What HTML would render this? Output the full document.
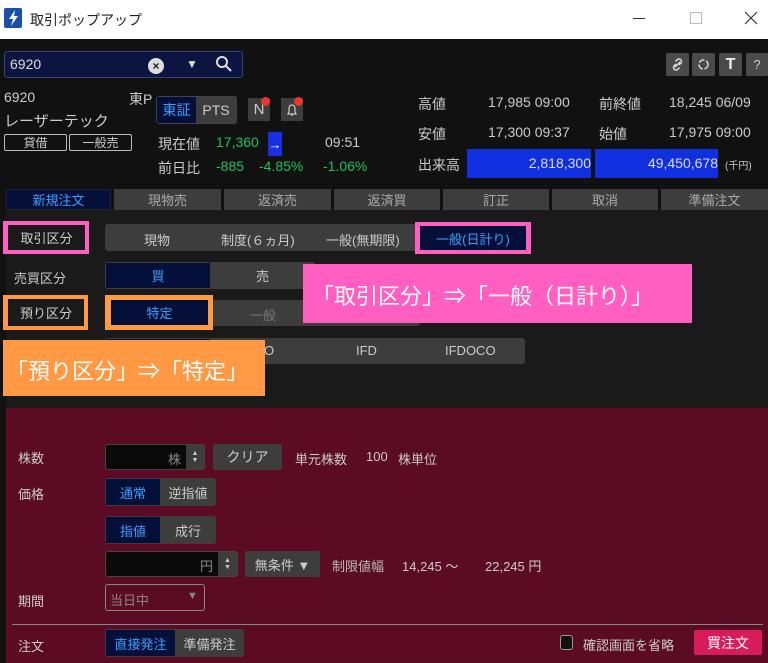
<!DOCTYPE html>
<html><head><meta charset="utf-8"><style>
*{margin:0;padding:0;box-sizing:border-box}
body{width:768px;height:663px;overflow:hidden;background:#111;font-family:"Liberation Sans","Noto Sans CJK JP",sans-serif;color:#ccc;position:relative;font-size:13px}
.a{position:absolute;white-space:nowrap}
.btn{position:absolute;display:flex;align-items:center;justify-content:center;white-space:nowrap}
.g{background:#3d3d3d;color:#ccc}
.n{background:#05103a;color:#3aa0ff}
.gr{color:#19c45a}
</style></head><body>
<div class="a" style="left:0;top:0;width:768px;height:39px;background:#fff"></div>
<div class="a" style="left:4px;top:8px;width:18px;height:20px;background:#1b4fa8;border-radius:2px"></div>
<svg class="a" style="left:4px;top:8px" width="18" height="20"><path d="M11 2 L5 11 H9 L7 18 L14 8 H10 Z" fill="#fff"/></svg>
<div class="a" style="left:30px;top:10px;color:#222;font-size:14px">取引ポップアップ</div>
<div class="a" style="left:633px;top:18px;width:12px;height:1px;background:#333"></div>
<div class="a" style="left:690px;top:12px;width:12px;height:12px;border:1px solid #bbb"></div>
<svg class="a" style="left:744px;top:11px" width="14" height="14"><path d="M1 1 L13 13 M13 1 L1 13" stroke="#333" stroke-width="1.2"/></svg>

<div class="a" style="left:4px;top:51px;width:239px;height:27px;background:#0b1540;border:1px solid #334477;border-radius:3px"></div>
<div class="a" style="left:10px;top:56px;color:#ddd;font-size:14px">6920</div>
<div class="a" style="left:148px;top:58px;width:16px;height:16px;border-radius:8px;background:#ddd;color:#222;font-size:12px;text-align:center;line-height:16px;font-weight:bold">×</div>
<div class="a" style="left:186px;top:57px;color:#ddd;font-size:12px">▼</div>
<svg class="a" style="left:215px;top:55px" width="18" height="18"><circle cx="7" cy="7" r="5" stroke="#ddd" stroke-width="2" fill="none"/><path d="M11 11 L16 16" stroke="#ddd" stroke-width="2"/></svg>
<div class="a" style="left:666px;top:53px;width:23px;height:23px;border-radius:2px;background:#4a4a4a"></div>
<svg class="a" style="left:666px;top:53px" width="23" height="23"><path d="M9 14 L14 9 M10 11 L8 13 a2.5 2.5 0 0 0 3.5 3.5 L13.5 14.5 M13 12 L15 10 a2.5 2.5 0 0 0 -3.5 -3.5 L9.5 8.5" stroke="#ddd" stroke-width="1.5" fill="none"/></svg>
<div class="a" style="left:692px;top:53px;width:23px;height:23px;border-radius:2px;background:#4a4a4a"></div>
<svg class="a" style="left:692px;top:53px" width="23" height="23"><circle cx="11.5" cy="11.5" r="4.5" stroke="#ddd" stroke-width="1.5" fill="none" stroke-dasharray="6 2"/></svg>
<div class="btn" style="left:719px;top:53px;width:23px;height:23px;border-radius:2px;font-weight:bold;font-size:16px;color:#eee;background:#4a4a4a">T</div>
<div class="btn" style="left:746px;top:53px;width:22px;height:23px;border-radius:2px;background:#4a4a4a;color:#ccc">?</div>

<div class="a" style="left:4px;top:89px;font-size:14px">6920</div>
<div class="a" style="left:129px;top:89px;font-size:14px">東P</div>
<div class="a" style="left:4px;top:110px;font-size:15px">レーザーテック</div>
<div class="btn" style="left:4px;top:134px;width:63px;height:17px;border:1px solid #bbb;border-radius:2px;font-size:12px">貸借</div>
<div class="btn" style="left:69px;top:134px;width:63px;height:17px;border:1px solid #bbb;border-radius:2px;font-size:12px">一般売</div>
<div class="a" style="left:156px;top:96px;width:81px;height:28px;border:1px solid #444;border-radius:3px;background:#3d3d3d"></div>
<div class="btn n" style="left:157px;top:97px;width:39px;height:26px;font-size:14px">東証</div>
<div class="btn" style="left:196px;top:97px;width:40px;height:26px;font-size:14px">PTS</div>
<div class="btn g" style="left:248px;top:98px;width:22px;height:23px;font-size:15px">N</div>
<div class="a" style="left:261px;top:97px;width:9px;height:9px;border-radius:5px;background:#e33"></div>
<div class="a g" style="left:281px;top:98px;width:22px;height:23px"></div>
<svg class="a" style="left:281px;top:98px" width="22" height="23"><path d="M7 16 H15 L14 14 V10 a3 3 0 0 0 -6 0 V14 Z M10 17 H12" stroke="#ccc" stroke-width="1.2" fill="none"/></svg>
<div class="a" style="left:294px;top:97px;width:9px;height:9px;border-radius:5px;background:#e33"></div>
<div class="a" style="left:158px;top:134px;font-size:14px">現在値</div>
<div class="a gr" style="left:216px;top:134px;font-size:14px">17,360</div>
<div class="btn" style="left:268px;top:132px;width:14px;height:24px;background:#1a2fe0;color:#fff">→</div>
<div class="a" style="left:325px;top:134px;font-size:14px">09:51</div>
<div class="a" style="left:158px;top:158px;font-size:14px">前日比</div>
<div class="a gr" style="left:216px;top:158px;font-size:14px">-885</div>
<div class="a gr" style="left:259px;top:158px;font-size:14px">-4.85%</div>
<div class="a gr" style="left:323px;top:158px;font-size:14px">-1.06%</div>

<div class="a" style="left:418px;top:94px;font-size:14px">高値</div>
<div class="a" style="left:488px;top:94px;font-size:14px">17,985 09:00</div>
<div class="a" style="left:599px;top:94px;font-size:14px">前終値</div>
<div class="a" style="left:669px;top:94px;font-size:14px">18,245 06/09</div>
<div class="a" style="left:418px;top:124px;font-size:14px">安値</div>
<div class="a" style="left:488px;top:124px;font-size:14px">17,300 09:37</div>
<div class="a" style="left:599px;top:124px;font-size:14px">始値</div>
<div class="a" style="left:669px;top:124px;font-size:14px">17,975 09:00</div>
<div class="a" style="left:418px;top:155px;font-size:14px">出来高</div>
<div class="a" style="left:467px;top:149px;width:124px;height:29px;background:#1030e0;color:#ddd;font-size:14px;text-align:right;line-height:29px">2,818,300</div>
<div class="a" style="left:595px;top:149px;width:123px;height:29px;background:#1030e0;color:#ddd;font-size:14px;text-align:right;line-height:29px">49,450,678</div>
<div class="a" style="left:725px;top:157px;font-size:10px">(千円)</div>

<div class="a" style="left:0;top:210px;width:768px;height:198px;background:#1a1a1a;border-left:6px solid #111"></div>
<div class="btn n" style="left:6px;top:189px;width:105px;height:21px;font-size:13px;border:1px solid #223">新規注文</div>
<div class="btn g" style="left:114px;top:189px;width:107px;height:21px;color:#aaa">現物売</div>
<div class="btn g" style="left:224px;top:189px;width:107px;height:21px;color:#aaa">返済売</div>
<div class="btn g" style="left:334px;top:189px;width:106px;height:21px;color:#aaa">返済買</div>
<div class="btn g" style="left:443px;top:189px;width:106px;height:21px;color:#aaa">訂正</div>
<div class="btn g" style="left:552px;top:189px;width:106px;height:21px;color:#aaa">取消</div>
<div class="btn g" style="left:661px;top:189px;width:107px;height:21px;color:#aaa">準備注文</div>

<div class="a" style="left:3px;top:221px;width:86px;height:33px;background:#ff5fc0"></div>
<div class="btn" style="left:8px;top:225px;width:77px;height:25px;background:#1a1a1a">取引区分</div>
<div class="a g" style="left:105px;top:224px;width:315px;height:27px;border-radius:3px"></div>
<div class="a" style="left:144px;top:230px">現物</div>
<div class="a" style="left:221px;top:230px">制度(６ヵ月)</div>
<div class="a" style="left:326px;top:230px">一般(無期限)</div>
<div class="a" style="left:415px;top:222px;width:116px;height:32px;background:#ff5fc0"></div>
<div class="btn n" style="left:420px;top:226px;width:106px;height:24px">一般(日計り)</div>

<div class="a" style="left:14px;top:268px">売買区分</div>
<div class="a g" style="left:105px;top:262px;width:210px;height:27px;border-radius:3px"></div>
<div class="btn n" style="left:106px;top:263px;width:104px;height:25px">買</div>
<div class="btn" style="left:210px;top:263px;width:105px;height:25px">売</div>

<div class="a g" style="left:105px;top:300px;width:315px;height:26px;border-radius:3px"></div>
<div class="a" style="left:250px;top:305px;color:#777">一般</div>
<div class="a" style="left:3px;top:295px;width:85px;height:35px;background:#ff9944"></div>
<div class="btn" style="left:8px;top:299px;width:76px;height:27px;background:#1a1a1a">預り区分</div>
<div class="a" style="left:105px;top:295px;width:108px;height:35px;background:#ff9944"></div>
<div class="btn n" style="left:111px;top:300px;width:97px;height:25px">特定</div>

<div class="a g" style="left:105px;top:338px;width:420px;height:26px;border-radius:3px"></div>
<div class="a n" style="left:106px;top:339px;width:104px;height:24px"></div>
<div class="a" style="left:264px;top:343px">O</div>
<div class="a" style="left:356px;top:343px">IFD</div>
<div class="a" style="left:445px;top:343px">IFDOCO</div>

<div class="a" style="left:303px;top:264px;width:389px;height:59px;background:#ff5fc0"></div>
<div class="a" style="left:312px;top:279px;color:#fff;font-size:22px">「取引区分」⇒「一般（日計り）」</div>
<div class="a" style="left:3px;top:340px;width:262px;height:56px;background:#ff9944"></div>
<div class="a" style="left:6px;top:354px;color:#fff;font-size:22px">「預り区分」⇒「特定」</div>

<div class="a" style="left:6px;top:408px;width:762px;height:255px;background:#5b0b24"></div>
<div class="a" style="left:18px;top:448px">株数</div>
<div class="a" style="left:105px;top:444px;width:100px;height:26px;background:#0a0a0a;border:1px solid #444;border-radius:3px"></div>
<div class="a" style="left:168px;top:449px;color:#888">株</div>
<div class="btn g" style="left:186px;top:445px;width:18px;height:24px;font-size:7px;flex-direction:column">▲<br>▼</div>
<div class="btn g" style="left:213px;top:444px;width:69px;height:26px;font-size:14px;border-radius:2px">クリア</div>
<div class="a" style="left:295px;top:449px">単元株数</div>
<div class="a" style="left:366px;top:449px">100</div>
<div class="a" style="left:398px;top:449px">株単位</div>

<div class="a" style="left:18px;top:484px">価格</div>
<div class="a g" style="left:105px;top:478px;width:111px;height:28px;border-radius:3px"></div>
<div class="btn n" style="left:106px;top:479px;width:54px;height:26px">通常</div>
<div class="btn" style="left:160px;top:479px;width:56px;height:26px">逆指値</div>
<div class="a g" style="left:105px;top:516px;width:111px;height:28px;border-radius:3px"></div>
<div class="btn n" style="left:106px;top:517px;width:54px;height:26px">指値</div>
<div class="btn" style="left:160px;top:517px;width:56px;height:26px">成行</div>

<div class="a" style="left:105px;top:551px;width:133px;height:26px;background:#0a0a0a;border:1px solid #444;border-radius:3px"></div>
<div class="a" style="left:200px;top:556px;color:#888">円</div>
<div class="btn g" style="left:218px;top:552px;width:19px;height:24px;font-size:7px;flex-direction:column">▲<br>▼</div>
<div class="btn g" style="left:245px;top:551px;width:75px;height:26px;border-radius:2px">無条件 ▼</div>
<div class="a" style="left:332px;top:556px;color:#bbb">制限値幅</div>
<div class="a" style="left:402px;top:556px">14,245 ～</div>
<div class="a" style="left:485px;top:556px">22,245 円</div>

<div class="a" style="left:18px;top:591px">期間</div>
<div class="a" style="left:105px;top:584px;width:100px;height:27px;border:1px solid #888;border-radius:3px"></div>
<div class="a" style="left:110px;top:590px;color:#888">当日中</div>
<div class="a" style="left:187px;top:590px;color:#888;font-size:11px">▼</div>
<div class="a" style="left:12px;top:624px;width:751px;height:1px;background:#888"></div>

<div class="a" style="left:18px;top:636px">注文</div>
<div class="a g" style="left:105px;top:629px;width:139px;height:28px;border-radius:3px"></div>
<div class="btn n" style="left:106px;top:630px;width:69px;height:26px">直接発注</div>
<div class="btn" style="left:175px;top:630px;width:69px;height:26px">準備発注</div>
<div class="a" style="left:560px;top:635px;width:13px;height:15px;background:#111;border:1px solid #999;border-radius:3px"></div>
<div class="a" style="left:583px;top:635px">確認画面を省略</div>
<div class="btn" style="left:694px;top:630px;width:68px;height:25px;background:#d81b5a;color:#fff;border-radius:2px;font-size:14px">買注文</div>
</body></html>
